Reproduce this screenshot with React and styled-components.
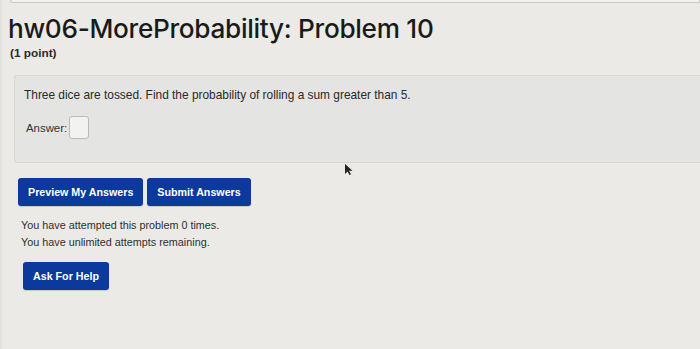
import React from "react";
import styled, { createGlobalStyle } from "styled-components";

const Global = createGlobalStyle`
  html, body { margin: 0; padding: 0; }
  body {
    width: 700px;
    height: 349px;
    overflow: hidden;
    background: #ebeae7;
    font-family: "Liberation Sans", Arial, sans-serif;
    color: #1d1d1d;
  }
`;

const Page = styled.div`
  position: relative;
  width: 700px;
  height: 349px;
  box-sizing: border-box;
  border-left: 2px solid #e2e1dd;
  padding-left: 6px;
`;

const TopStrip = styled.div`
  height: 2px;
  margin-left: 2px;
  border: 1px solid #c9c9c7;
  border-top: none;
  border-radius: 0 0 0 4px;
  background: #f2f2f0;
`;

const Title = styled.h1`
  margin: 11px 0 0 0;
  font-family: "Inter", "Liberation Sans", Arial, sans-serif;
  font-size: 26.2px;
  font-weight: 500;
  letter-spacing: -0.3px;
  line-height: 30px;
  color: #1a1a1a;
`;

const Points = styled.div`
  margin: 2px 0 0 2px;
  font-size: 11.8px;
  font-weight: 700;
  color: #2a2a2a;
`;

const ProblemBox = styled.div`
  margin: 15px 0 0 6px;
  height: 88px;
  box-sizing: border-box;
  background: #e4e4e2;
  border: 1px solid #d6d6d3;
  border-right: none;
  border-radius: 3px 0 0 3px;
  padding: 12px 0 0 9px;
  display: flex;
  flex-direction: column;
  gap: 14px;
`;

const Question = styled.div`
  font-size: 11.9px;
  color: #2a2a2a;
`;

const AnswerRow = styled.div`
  display: flex;
  align-items: center;
  gap: 2px;
  padding-left: 2px;
  font-size: 11.4px;
  color: #333;
`;

const AnswerInput = styled.div`
  width: 18px;
  height: 21px;
  border: 1px solid #b9b9b7;
  border-radius: 3px;
  background: #f2f2f0;
`;

const ButtonRow = styled.div`
  display: flex;
  gap: 4px;
  margin: 15px 0 0 10px;
`;

const Button = styled.div`
  height: 28px;
  padding: 0 10px;
  display: flex;
  align-items: center;
  background: #0b3a9c;
  border-radius: 3px;
  color: #ffffff;
  font-size: 10.7px;
  font-weight: 700;
  box-shadow: 0 1px 1px rgba(0, 0, 0, 0.15);
`;

const Info = styled.div`
  margin: 11px 0 0 13px;
  font-size: 10.8px;
  line-height: 17px;
  color: #2e2e2e;
`;

const HelpRow = styled.div`
  display: flex;
  margin: 11px 0 0 15px;
`;

const Cursor = styled.svg`
  position: absolute;
  left: 342px;
  top: 163px;
`;

export default function App() {
  return (
    <>
      <Global />
      <Page>
        <TopStrip />
        <Title>hw06-MoreProbability: Problem 10</Title>
        <Points>(1 point)</Points>
        <ProblemBox>
          <Question>
            Three dice are tossed. Find the probability of rolling a sum greater than 5.
          </Question>
          <AnswerRow>
            <span>Answer:</span>
            <AnswerInput />
          </AnswerRow>
        </ProblemBox>
        <ButtonRow>
          <Button>Preview My Answers</Button>
          <Button>Submit Answers</Button>
        </ButtonRow>
        <Info>
          You have attempted this problem 0 times.
          <br />
          You have unlimited attempts remaining.
        </Info>
        <HelpRow>
          <Button>Ask For Help</Button>
        </HelpRow>
        <Cursor width="10" height="13" viewBox="0 0 10 13">
          <path d="M1 1 L1 11 L3.5 8.5 L5.5 12 L7 11.2 L5 7.8 L8.5 7.8 Z" fill="#222" />
        </Cursor>
      </Page>
    </>
  );
}
